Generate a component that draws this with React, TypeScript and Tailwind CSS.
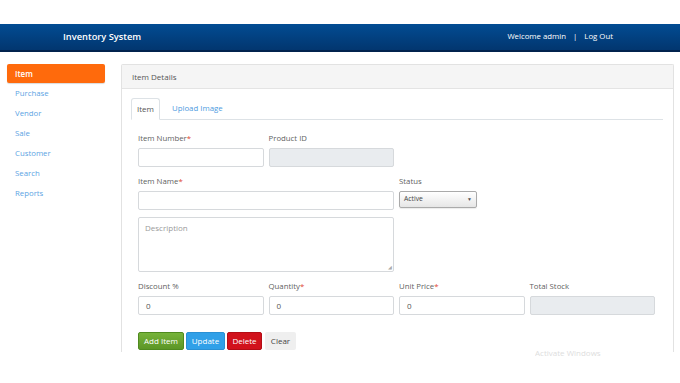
import React from 'react';

const links = ['Purchase', 'Vendor', 'Sale', 'Customer', 'Search', 'Reports'];

function Label({ text, req }: { text: string; req?: boolean }) {
  return (
    <div className="h-[10px] leading-[10px] text-[7.8px] text-[#5f5f5f] mb-[5px]">
      {text}
      {req && <span className="text-[#e0452f]">*</span>}
    </div>
  );
}

function Input({ value, disabled }: { value?: string; disabled?: boolean }) {
  return (
    <div
      className={`h-[19px] rounded-[2px] border border-[#d6d9dc] px-[7px] flex items-center text-[8px] text-[#555] ${
        disabled ? 'bg-[#e9ecef]' : 'bg-white'
      }`}
    >
      {value}
    </div>
  );
}

export default function App() {
  return (
    <div className="w-[680px] h-[383px] bg-white overflow-hidden relative" style={{ fontFamily: '"Open Sans", "Noto Sans", sans-serif' }}>
      {/* top bar */}
      <div className="mt-[24px] h-[28px] bg-gradient-to-b from-[#024c93] to-[#02366f] border-b-2 border-[#01234d] flex items-center px-[63px]">
        <span className="text-white text-[9.3px] font-semibold">Inventory System</span>
        <div className="ml-auto mr-[4px] flex items-center text-white text-[7.8px]">
          <span>Welcome admin</span>
          <span className="mx-[7px]">|</span>
          <span>Log Out</span>
        </div>
      </div>

      <div className="flex mt-[12px]">
        {/* sidebar */}
        <div className="w-[98px] ml-[7px] shrink-0">
          <div className="h-[19px] rounded-[2px] bg-[#ff6a0c] text-white text-[8px] font-semibold flex items-center pl-[8px] shadow-[0_1px_1px_rgba(0,0,0,0.15)]">
            Item
          </div>
          <div className="flex flex-col">
            {links.map((l) => (
              <div key={l} className="h-[20px] pl-[8px] flex items-center text-[7.8px] text-[#5ba3e3] first:mt-[1px]">
                {l}
              </div>
            ))}
          </div>
        </div>

        {/* panel */}
        <div className="ml-[16px] w-[553px] h-[288px] border-x border-t border-[#e2e2e2] rounded-t-[2px]">
          <div className="h-[24px] bg-[#f5f5f5] border-b border-[#e4e4e4] flex items-center pl-[10px] text-[8px] text-[#555]">
            Item Details
          </div>
          <div className="pl-[9px] pr-[10px] pt-[10px]">
            {/* tabs */}
            <div className="flex items-end border-b border-[#dde2e6] h-[21px]">
              <div className="w-[29px] h-[22px] -mb-px flex items-center justify-center border border-[#dde2e6] border-b-white bg-white rounded-t-[3px] text-[8px] text-[#555]">
                Item
              </div>
              <div className="h-[21px] pl-[12px] flex items-center text-[7.8px] text-[#4d9be0]">Upload Image</div>
            </div>

            <div className="pl-[7px] w-[524px] pt-[13px]">
              <div className="grid grid-cols-4 gap-x-[5px]">
                <div>
                  <Label text="Item Number" req />
                  <Input />
                </div>
                <div>
                  <Label text="Product ID" />
                  <Input disabled />
                </div>
              </div>

              <div className="grid grid-cols-4 gap-x-[5px] mt-[9px]">
                <div className="col-span-2">
                  <Label text="Item Name" req />
                  <Input />
                </div>
                <div>
                  <Label text="Status" />
                  <div className="mt-[1px] w-[78px] h-[17px] rounded-[2px] border border-[#aaa] bg-gradient-to-b from-white to-[#e6e6e6] flex items-center px-[4px] text-[6.8px] text-[#444] shadow-[0_1px_1px_rgba(0,0,0,0.08)]">
                    <span>Active</span>
                    <span className="ml-auto text-[5px] text-[#555]">▼</span>
                  </div>
                </div>
              </div>

              <div className="grid grid-cols-4 gap-x-[5px] mt-[7px]">
                <div className="col-span-2 h-[55px] rounded-[2px] border border-[#d6d9dc] bg-white px-[6px] pt-[4px] text-[8px] text-[#9a9a9a] relative">
                  Description
                  <span className="absolute right-[1px] bottom-[1px] text-[5px] text-[#aaa] leading-none">◢</span>
                </div>
              </div>

              <div className="grid grid-cols-4 gap-x-[5px] mt-[9px]">
                <div>
                  <Label text="Discount %" />
                  <Input value="0" />
                </div>
                <div>
                  <Label text="Quantity" req />
                  <Input value="0" />
                </div>
                <div>
                  <Label text="Unit Price" req />
                  <Input value="0" />
                </div>
                <div>
                  <Label text="Total Stock" />
                  <Input disabled />
                </div>
              </div>

              <div className="flex mt-[17px] gap-[2px]">
                <button className="h-[18px] w-[46px] rounded-[2px] bg-gradient-to-b from-[#76b33a] to-[#5c9626] border border-[#4f8a1f] text-white text-[8px]">
                  Add Item
                </button>
                <button className="h-[18px] w-[39px] rounded-[2px] bg-[#30a0e8] border border-[#2a90d4] text-white text-[8px]">
                  Update
                </button>
                <button className="h-[18px] w-[35px] rounded-[2px] bg-[#d1121c] border border-[#b30d16] text-white text-[8px]">
                  Delete
                </button>
                <button className="ml-[1px] h-[18px] w-[31px] rounded-[2px] bg-[#efefef] text-[#444] text-[8px]">
                  Clear
                </button>
              </div>
            </div>
          </div>
        </div>
      </div>

      <div className="absolute left-[535px] top-[347px] text-[8px] text-[#c8c8c8] opacity-60">Activate Windows</div>
    </div>
  );
}
